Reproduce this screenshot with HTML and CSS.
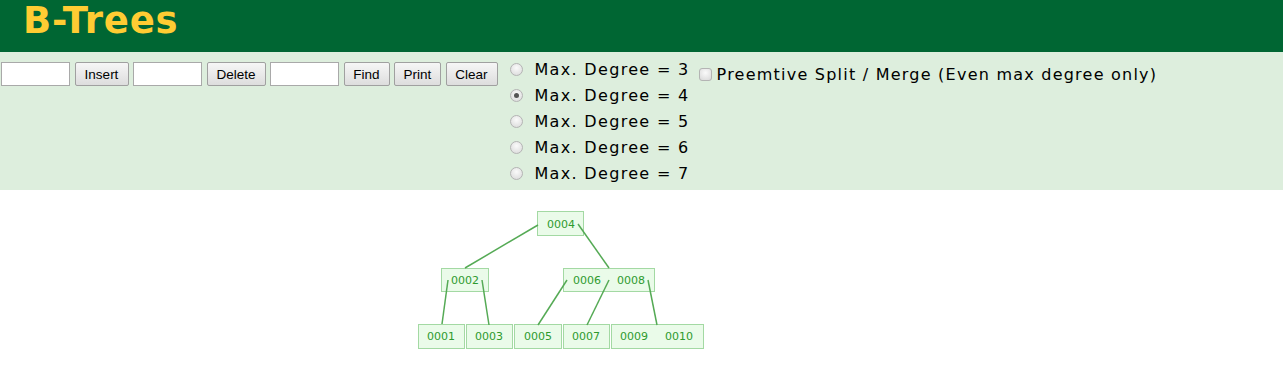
FILE: index.html
```html
<!DOCTYPE html>
<html lang="en">
<head>
    <meta charset="UTF-8">
    <title>B-Trees</title>
    <link rel="stylesheet" href="styles.css">
</head>
<body>
    <!-- Page header -->
    <div class="header">
        <h1>B-Trees</h1>
    </div>

    <!-- Algorithm controls -->
    <div class="controls">
        <div class="ops">
            <input type="text" class="field">
            <button class="btn btn-insert">Insert</button>
            <input type="text" class="field">
            <button class="btn btn-delete">Delete</button>
            <input type="text" class="field">
            <button class="btn btn-find">Find</button>
            <button class="btn btn-print">Print</button>
            <button class="btn btn-clear">Clear</button>
        </div>
        <div class="degrees">
            <label class="degree"><input type="radio" name="degree" value="3">Max. Degree = 3</label>
            <label class="degree"><input type="radio" name="degree" value="4" checked>Max. Degree = 4</label>
            <label class="degree"><input type="radio" name="degree" value="5">Max. Degree = 5</label>
            <label class="degree"><input type="radio" name="degree" value="6">Max. Degree = 6</label>
            <label class="degree"><input type="radio" name="degree" value="7">Max. Degree = 7</label>
        </div>
        <label class="preempt"><input type="checkbox">Preemtive Split / Merge (Even max degree only)</label>
    </div>

    <!-- Tree drawing -->
    <div class="canvas">
        <svg width="1283" height="185" viewBox="0 0 1283 185">
            <g class="node">
                <rect x="537.5" y="21.5" width="46" height="24"></rect>
                <rect x="441.5" y="78.5" width="47" height="23"></rect>
                <rect x="563.5" y="78.5" width="91" height="23"></rect>
                <rect x="418.5" y="134.5" width="46" height="24"></rect>
                <rect x="466.5" y="134.5" width="46" height="24"></rect>
                <rect x="514.5" y="134.5" width="47" height="24"></rect>
                <rect x="563.5" y="134.5" width="46" height="24"></rect>
                <rect x="611.5" y="134.5" width="92" height="24"></rect>
            </g>
            <g class="key">
                <text x="561" y="38">0004</text>
                <text x="465" y="94">0002</text>
                <text x="587" y="94">0006</text>
                <text x="631" y="94">0008</text>
                <text x="441" y="150">0001</text>
                <text x="489" y="150">0003</text>
                <text x="538" y="150">0005</text>
                <text x="586" y="150">0007</text>
                <text x="634" y="150">0009</text>
                <text x="679" y="150">0010</text>
            </g>
            <g class="edge">
                <line x1="538" y1="35" x2="465" y2="78"></line>
                <line x1="578" y1="34" x2="609" y2="78"></line>
                <line x1="448" y1="90" x2="442" y2="134"></line>
                <line x1="482" y1="90" x2="489" y2="135"></line>
                <line x1="567" y1="90" x2="538" y2="135"></line>
                <line x1="609" y1="90" x2="587" y2="135"></line>
                <line x1="648" y1="90" x2="657" y2="135"></line>
            </g>
        </svg>
    </div>
</body>
</html>
```

FILE: styles.css
```css
body {
    margin: 0;
    font-family: "DejaVu Sans", Verdana, sans-serif;
    background-color: #fff;
}
.header {
    height: 52px;
    background-color: #006633;
}
.header h1 {
    margin: 0;
    padding-left: 23px;
    line-height: 42px;
    font-size: 37px;
    letter-spacing: 0.8px;
    font-weight: bold;
    color: #ffcc33;
}
.controls {
    display: flex;
    align-items: flex-start;
    height: 138px;
    background-color: #ddeedd;
}
.ops {
    display: flex;
    gap: 4.5px;
    margin: 10px 0 0 1px;
}
.field {
    width: 69px;
    height: 24px;
    box-sizing: border-box;
    margin: 0;
    border: 1px solid #a9a9a9;
    background: #fff;
}
.btn {
    height: 24px;
    margin: 0;
    padding: 0;
    font-family: "Liberation Sans", Arial, sans-serif;
    font-size: 13.5px;
    color: #000;
    background: linear-gradient(#f6f6f6, #dddddd);
    border: 1px solid #a0a0a0;
    border-radius: 2px;
}
.btn-insert { width: 54px; }
.btn-delete { width: 59px; }
.btn-find { width: 46px; }
.btn-print { width: 47px; }
.btn-clear { width: 52px; }
.degrees {
    display: flex;
    flex-direction: column;
    margin: 4px 0 0 11px;
}
.degree {
    display: flex;
    align-items: center;
    height: 26px;
    font-size: 16px;
    letter-spacing: 1.32px;
    color: #000;
}
/* grey Windows-style radio and checkbox */
.degree input,
.preempt input {
    appearance: none;
    width: 13px;
    height: 13px;
    box-sizing: border-box;
    border: 1px solid #b4b4b4;
    background: radial-gradient(circle at 50% 35%, #fafafa, #d8d8d8);
}
.degree input {
    margin: 0 12px 0 1px;
    border-radius: 50%;
    display: grid;
    place-items: center;
}
.degree input:checked::before {
    content: "";
    width: 5px;
    height: 5px;
    border-radius: 50%;
    background: #555;
}
.preempt {
    display: flex;
    align-items: center;
    margin: 9px 0 0 9px;
    height: 26px;
    font-size: 16px;
    letter-spacing: 1.23px;
    color: #000;
}
.preempt input {
    margin: 0 5px 0 0;
    border-radius: 3px;
}
.canvas svg {
    display: block;
}
.node rect {
    fill: #eafbe9;
    stroke: #a3d9a3;
    stroke-width: 1;
}
.key text {
    font-family: "DejaVu Sans", Verdana, sans-serif;
    font-size: 11px;
    fill: #2e9a2e;
    text-anchor: middle;
}
.edge line {
    stroke: #55aa55;
    stroke-width: 1.5;
}
```
